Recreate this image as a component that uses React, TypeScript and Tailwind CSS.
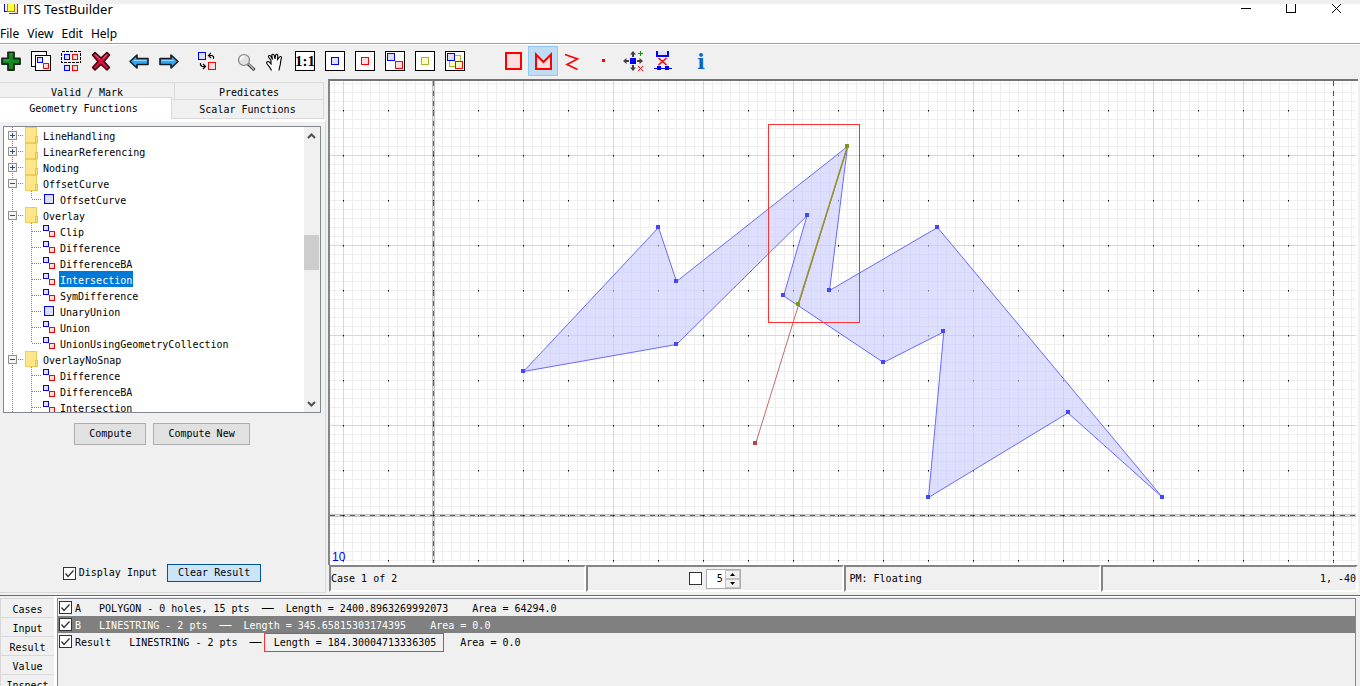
import { useState, type ReactNode } from "react";

const MONO = "font-['DejaVu_Sans_Mono','Liberation_Mono',monospace]";
const UI = "font-['Noto_Sans','Open_Sans',sans-serif]";

type Point = [number, number];

const POLYGON: Point[] = [
  [100, 160],
  [250, 320],
  [270, 260],
  [460, 410],
  [440, 250],
  [560, 320],
  [810, 20],
  [705, 114],
  [550, 20],
  [567, 204],
  [500, 170],
  [389, 244],
  [415, 333],
  [270, 190],
];
const LINE: Point[] = [
  [460, 410],
  [358, 80],
];
const RESULT: Point[] = [
  [460, 410],
  [405, 234],
];

// Model to view transform: origin in pixels and 0.9 px per model unit.
const ORIGIN_X = 103.5;
const ORIGIN_Y = 434.5;
const SCALE = 0.9;

const toView = ([x, y]: Point): Point => [ORIGIN_X + x * SCALE, ORIGIN_Y - y * SCALE];
const toPath = (pts: Point[]) => pts.map((p) => toView(p).join(",")).join(" ");

type TreeRow = { label: string; kind: "folder" | "unary" | "binary"; open?: boolean; last?: boolean; root?: string };

const TREE: TreeRow[] = [
  { label: "LineHandling", kind: "folder" },
  { label: "LinearReferencing", kind: "folder" },
  { label: "Noding", kind: "folder" },
  { label: "OffsetCurve", kind: "folder", open: true },
  { label: "OffsetCurve", kind: "unary", last: true, root: "OffsetCurve" },
  { label: "Overlay", kind: "folder", open: true },
  { label: "Clip", kind: "binary", root: "Overlay" },
  { label: "Difference", kind: "binary", root: "Overlay" },
  { label: "DifferenceBA", kind: "binary", root: "Overlay" },
  { label: "Intersection", kind: "binary", root: "Overlay" },
  { label: "SymDifference", kind: "binary", root: "Overlay" },
  { label: "UnaryUnion", kind: "unary", root: "Overlay" },
  { label: "Union", kind: "binary", root: "Overlay" },
  { label: "UnionUsingGeometryCollection", kind: "binary", last: true, root: "Overlay" },
  { label: "OverlayNoSnap", kind: "folder", open: true },
  { label: "Difference", kind: "binary", root: "OverlayNoSnap" },
  { label: "DifferenceBA", kind: "binary", root: "OverlayNoSnap" },
  { label: "Intersection", kind: "binary", root: "OverlayNoSnap" },
];

export default function App() {
  return (
    <div className={`flex h-screen min-h-0 flex-col overflow-hidden bg-[#f0f0f0] text-[10px] leading-4 text-black ${MONO}`}>
      <TitleBar />
      <MenuBar />
      <Toolbar />
      <main className="flex min-h-0 flex-1">
        <FunctionPanel />
        <section className="mr-0.5 flex min-w-0 flex-1 flex-col">
          <div className="min-h-0 flex-1 border-t-2 border-l-2 border-t-[#747474] border-l-[#858585] bg-white pr-0.5 pb-0.5">
            <GeometryCanvas />
          </div>
          <StatusBar />
        </section>
      </main>
      <ResultPanel />
    </div>
  );
}

function TitleBar() {
  return (
    <header className={`flex h-3.5 shrink-0 items-center border-t-4 border-[#f0f0f0] bg-white pl-1 text-[13px] ${UI}`}>
      <svg width="15" height="10" shapeRendering="crispEdges" aria-hidden="true">
        <path d="M0.5 0V7.5H6" fill="none" stroke="#00f" />
        <rect x="9" y="1" width="4" height="9" fill="#ffd6c0" />
        <path d="M13.5 0V10M5 9.5H14" fill="none" stroke="#f00" />
        <rect x="3.5" y="-2" width="7" height="9" fill="#ffff3c" stroke="#a08a10" />
      </svg>
      <h1 className="ml-1 flex-1">JTS TestBuilder</h1>
      <div className="flex gap-[34px] pr-[18px]">
        <button aria-label="Minimize">
          <svg width="11" height="10" shapeRendering="crispEdges">
            <path d="M0 4.5H10" stroke="#000" />
          </svg>
        </button>
        <button aria-label="Maximize">
          <svg width="11" height="10" shapeRendering="crispEdges">
            <path d="M0.5 0V8.5H9.5V0" fill="none" stroke="#000" />
          </svg>
        </button>
        <button aria-label="Close">
          <svg width="11" height="10">
            <path d="M1 0L10 9M10 0L1 9" stroke="#000" />
          </svg>
        </button>
      </div>
    </header>
  );
}

function MenuBar() {
  return (
    <nav className={`flex h-[30px] shrink-0 items-end gap-2 border-b border-[#a0a0a0] bg-white text-[12px] ${UI}`}>
      {["File", "View", "Edit", "Help"].map((label) => (
        <button key={label} className="h-[18px] leading-[18px]">
          {label}
        </button>
      ))}
    </nav>
  );
}

function Tool({ label, active, children }: { label: string; active?: boolean; children: ReactNode }) {
  return (
    <button
      aria-label={label}
      aria-pressed={active}
      className={`flex size-[30px] shrink-0 items-center justify-center ${active ? "border border-[#90c8f6] bg-[#c0dcf3]" : ""}`}
    >
      <svg width="20" height="20" viewBox="0 0 20 20" fill="none" className="shrink-0 overflow-visible">
        {children}
      </svg>
    </button>
  );
}

function Sq({ x, y, s, c }: { x: number; y: number; s: number; c: "blue" | "red" | "olive" }) {
  const stroke = { blue: "#00f", red: "#f00", olive: "#a8b432" }[c];
  const fill = { blue: "#dedeff", red: "#ffdede", olive: "#ffffc0" }[c];
  return <rect x={x + 0.5} y={y + 0.5} width={s - 1} height={s - 1} fill={fill} stroke={stroke} shapeRendering="crispEdges" />;
}

function Frame() {
  return <rect x="0.5" y="0.5" width="19" height="19" fill="#fff" stroke="#000" shapeRendering="crispEdges" />;
}

function Toolbar() {
  return (
    <div role="toolbar" className="flex h-[35px] shrink-0 items-start gap-2 border-t border-white pt-px">
      <div className="-ml-1 flex">
        <Tool label="New case">
          <path d="M7 1.5H13V7.5H19V13H13V19H7V13H1V7.5H7Z" fill="#118a22" stroke="#182818" strokeWidth="1.8" strokeLinejoin="round" />
          <path d="M8.5 3H11.5M2.5 9H8.5" stroke="#4cc04c" />
        </Tool>
        <Tool label="Copy case">
          <g shapeRendering="crispEdges">
            <rect x="0.5" y="0.5" width="15" height="15" fill="#fff" stroke="#000" />
            <rect x="4.5" y="4.5" width="15" height="15" fill="#fff" stroke="#000" />
          </g>
          <Sq x={6} y={6} s={6} c="blue" />
          <Sq x={12} y={12} s={6} c="red" />
        </Tool>
        <Tool label="Extract components">
          <rect x="0.5" y="0.5" width="19" height="11" stroke="#000" strokeDasharray="3 1" shapeRendering="crispEdges" />
          <Sq x={3} y={3} s={6} c="blue" />
          <Sq x={11} y={3} s={6} c="red" />
          <Sq x={3} y={14} s={6} c="blue" />
          <Sq x={11} y={14} s={6} c="red" />
        </Tool>
        <Tool label="Delete case">
          <path
            d="M4 1.5L10 7L16 1.5L18.5 4L13 10.5L18.5 16.5L16 19L10 13.5L4 19L1.5 16.5L7 10.5L1.5 4Z"
            fill="#d80f3c"
            stroke="#3c0810"
            strokeWidth="1.6"
            strokeLinejoin="round"
          />
          <path d="M4 3.5L9 8.5M16 3.5L12 7.5" stroke="#ff6d86" />
        </Tool>
      </div>
      <div className="flex">
        <Tool label="Previous case">
          <path d="M1 10.5L8 4V7.5H19V13.5H8V17Z" fill="#2fa8f5" stroke="#151c24" strokeWidth="1.6" strokeLinejoin="round" />
          <path d="M5 9.5H17.5" stroke="#93d6ff" />
        </Tool>
        <Tool label="Next case">
          <path d="M19 10.5L12 4V7.5H1V13.5H12V17Z" fill="#2fa8f5" stroke="#151c24" strokeWidth="1.6" strokeLinejoin="round" />
          <path d="M2.5 9.5H15" stroke="#93d6ff" />
        </Tool>
      </div>
      <div className="flex">
        <Tool label="Exchange A and B">
          <Sq x={1} y={1} s={8} c="blue" />
          <Sq x={11} y={11} s={8} c="red" />
          <path d="M16.5 8V5.5L15 4.5H12M14 2L11.5 4.5L14 7M3.5 12V14L5 15.5H8M6 13L8.5 15.5L6 18" stroke="#000" strokeWidth="1.2" />
        </Tool>
      </div>
      <div className="flex">
        <Tool label="Zoom">
          <path d="M13 13L19.5 19" stroke="#222" strokeWidth="3" />
          <path d="M13.5 13L19 18.5" stroke="#ccc" strokeWidth="1.2" />
          <circle cx="9" cy="9" r="5.5" fill="#e2e2e2" stroke="#808080" strokeWidth="1.2" />
          <path d="M5.5 9A3.5 3.5 0 0 1 9 5.5" stroke="#fff" strokeWidth="1.5" />
        </Tool>
        <Tool label="Pan">
          <path
            d="M6.5 19.5C6 17.5 4 15.5 1.8 12.5C1 11 3 9.8 4.5 11.2L6 13V9.5L3.5 6C3 4.5 5 4 5.8 5.2L7.5 8.5L6.8 4.5C6.8 2.8 8.8 2.8 9.2 4.5L10 8L10.7 4.2C11 2.6 13 3 12.8 4.8L12.5 8.5L14.6 6C15.6 4.8 17.2 6 16.2 7.8L15.5 11C15.8 14 14 16.5 14 19.5"
            fill="#fff"
            stroke="#000"
            strokeWidth="1.1"
          />
        </Tool>
        <Tool label="Zoom 1:1">
          <Frame />
          <text x="10" y="15" textAnchor="middle" fill="#000" className="font-['Liberation_Serif',serif] text-[15px] font-bold">
            1:1
          </text>
        </Tool>
        <Tool label="Zoom to A">
          <Frame />
          <Sq x={6} y={6} s={8} c="blue" />
        </Tool>
        <Tool label="Zoom to B">
          <Frame />
          <Sq x={6} y={6} s={8} c="red" />
        </Tool>
        <Tool label="Zoom to input">
          <Frame />
          <Sq x={2} y={2} s={8} c="blue" />
          <Sq x={10} y={10} s={8} c="red" />
        </Tool>
        <Tool label="Zoom to result">
          <Frame />
          <Sq x={6} y={6} s={8} c="olive" />
        </Tool>
        <Tool label="Zoom to all">
          <Frame />
          <Sq x={4} y={4} s={12} c="olive" />
          <Sq x={2} y={2} s={8} c="blue" />
          <rect x="10.5" y="10.5" width="7" height="7" fill="#ffffc0" stroke="#f00" shapeRendering="crispEdges" />
        </Tool>
      </div>
      <div className="ml-5 flex">
        <Tool label="Draw rectangle">
          <rect x="3" y="2" width="15" height="16" fill="#ffdede" stroke="#f00" strokeWidth="2" shapeRendering="crispEdges" />
        </Tool>
        <Tool label="Draw polygon" active>
          <path d="M3 18V3.5L10.5 11L18 3.5V18Z" fill="#ffdede" stroke="#f00" strokeWidth="2" />
        </Tool>
        <Tool label="Draw line">
          <path d="M2 3.5L14.5 8L4 13.5L14.5 18.5" stroke="#f00" strokeWidth="1.6" />
        </Tool>
        <Tool label="Draw point">
          <rect x="9" y="8" width="3" height="3" fill="#f00" />
        </Tool>
        <Tool label="Move vertices">
          <rect x="7" y="7" width="6" height="6" fill="#00f" />
          <path d="M10 3V6M10 14V17M3 10H6M14 10H17" stroke="#404040" strokeWidth="2" />
          <path d="M10 0L13 3.5H7ZM10 20L13 16.5H7ZM0 10L3.5 7V13ZM20 10L16.5 7V13Z" fill="#404040" />
          <path d="M17.5 0V5M15 2.5H20" stroke="#00a000" />
          <path d="M15 15L20 20M20 15L15 20" stroke="#f00" />
        </Tool>
        <Tool label="Delete component">
          <path d="M4 0V5H15V0" fill="#dedeff" stroke="#00f" strokeWidth="2" />
          <path d="M5.5 7L13.5 14M13.5 7L5.5 14" stroke="#f00" strokeWidth="1.6" />
          <path d="M1 17.5H19" stroke="#00f" />
          <rect x="4" y="15" width="4" height="4" fill="#00f" />
          <rect x="12" y="15" width="4" height="4" fill="#00f" />
        </Tool>
      </div>
      <div className="flex">
        <Tool label="Geometry info">
          <text x="10" y="18" textAnchor="middle" fill="#0a64c8" className="font-['DejaVu_Serif','Liberation_Serif',serif] text-[20px] font-bold">
            i
          </text>
        </Tool>
      </div>
    </div>
  );
}

function FunctionPanel() {
  const [selected, setSelected] = useState("Overlay/Intersection");

  return (
    <aside className="flex w-[328px] shrink-0 flex-col pt-[3px]">
      <div role="tablist" className="pr-1">
        <div className="flex h-[17px]">
          <button role="tab" className="w-[175px] overflow-hidden border-t border-r border-[#d9d9d9] pt-0.5 leading-4">
            Valid / Mark
          </button>
          <button role="tab" className="flex-1 overflow-hidden border-t border-r border-[#d9d9d9] pt-0.5 leading-4">
            Predicates
          </button>
        </div>
        <div className="flex h-5">
          <button role="tab" aria-selected="true" className="-mt-0.5 w-[172px] border-t border-r border-[#d9d9d9] bg-white pr-1">
            Geometry Functions
          </button>
          <button role="tab" className="flex-1 border border-l-0 border-[#d9d9d9] pt-0.5">
            Scalar Functions
          </button>
        </div>
      </div>
      <div className="mr-0.5 mb-0.5 flex min-h-0 flex-1 flex-col border-t-3 border-r border-b border-t-white border-r-[#d9d9d9] border-b-[#d9d9d9] pt-1 pl-[3px]">
        <div className="flex h-[287px] w-[318px] border border-[#828790] bg-white">
          <ul role="tree" className="min-w-0 flex-1 overflow-hidden">
            {TREE.map((row) => {
              const id = `${row.root ?? ""}/${row.label}`;
              return <TreeItem key={id} row={row} selected={id === selected} onSelect={() => setSelected(id)} />;
            })}
          </ul>
          <div className="flex w-4 flex-col justify-between bg-[#f0f0f0] pr-px">
            <button aria-label="Scroll up" className="flex h-[17px] items-center justify-center">
              <svg width="9" height="6" fill="none">
                <path d="M1 5L4.5 1.5L8 5" stroke="#505050" strokeWidth="2" />
              </svg>
            </button>
            <div className="flex-1 pt-[91px]">
              <div className="h-[35px] bg-[#cdcdcd]" />
            </div>
            <button aria-label="Scroll down" className="flex h-[17px] items-center justify-center">
              <svg width="9" height="6" fill="none">
                <path d="M1 1L4.5 4.5L8 1" stroke="#505050" strokeWidth="2" />
              </svg>
            </button>
          </div>
        </div>
        <div className="mt-[10px] flex justify-center gap-[7px] pr-1">
          <button className="h-[22px] border border-[#adadad] bg-[#e1e1e1] px-[14px]">Compute</button>
          <button className="h-[22px] border border-[#adadad] bg-[#e1e1e1] px-[14px]">Compute New</button>
        </div>
        <div className="mt-auto mb-[10px] flex items-center justify-center gap-[10px] pr-1">
          <label className="flex items-center gap-[3px]">
            <Check defaultChecked />
            Display Input
          </label>
          <button className="h-[18px] border border-[#00559b] bg-[#cce4f7] px-[10px]">Clear Result</button>
        </div>
      </div>
    </aside>
  );
}

function TreeItem({ row, selected, onSelect }: { row: TreeRow; selected: boolean; onSelect: () => void }) {
  const isFolder = row.kind === "folder";
  return (
    <li role="treeitem" aria-selected={selected} onClick={onSelect} className="flex h-4">
      <svg width={isFolder ? 38 : 55} height="16" className="shrink-0" fill="none" shapeRendering="crispEdges" aria-hidden="true">
        <path d="M8.5 0V16" stroke="#808080" strokeDasharray="1 1" />
        {isFolder ? (
          <>
            <path d="M14 8.5H20" stroke="#808080" strokeDasharray="1 1" />
            <rect x="4.5" y="4.5" width="8" height="8" fill="#f4f4f4" stroke="#919191" />
            <path d="M6 8.5H11" stroke="#2b4b9b" />
            {!row.open && <path d="M8.5 6V11" stroke="#2b4b9b" />}
            <rect x="21.5" y="0.5" width="11" height="15" fill="#ffe68c" stroke="#f0cd55" />
            <rect x="31.5" y="9.5" width="2" height="6" fill="#ffe68c" stroke="#e8c23c" />
          </>
        ) : (
          <>
            <path d={row.last ? "M27.5 0V8" : "M27.5 0V16"} stroke="#808080" strokeDasharray="1 1" />
            <path d="M28 8.5H37" stroke="#808080" strokeDasharray="1 1" />
            {row.kind === "unary" ? (
              <Sq x={40} y={3} s={10} c="blue" />
            ) : (
              <>
                <Sq x={39} y={2} s={6} c="blue" />
                <Sq x={45} y={8} s={6} c="red" />
              </>
            )}
          </>
        )}
      </svg>
      <span className={`h-4 px-px pt-0.5 whitespace-nowrap ${selected ? "bg-[#0078d7] text-white" : ""}`}>{row.label}</span>
    </li>
  );
}

function Check({ defaultChecked, label }: { defaultChecked?: boolean; label?: string }) {
  return (
    <span className="relative inline-flex size-[13px] shrink-0">
      <input
        type="checkbox"
        defaultChecked={defaultChecked}
        aria-label={label}
        className="peer size-[13px] appearance-none border border-[#333] bg-white"
      />
      <svg viewBox="0 0 13 13" fill="none" className="pointer-events-none absolute inset-0 hidden peer-checked:block">
        <path d="M2.5 6.5L5 9.5L10.5 3.5" stroke="#333" strokeWidth="1.3" />
      </svg>
    </span>
  );
}

function Vertices({ pts, color }: { pts: Point[]; color: string }) {
  return (
    <>
      {pts.map((p) => {
        const [x, y] = toView(p);
        return <rect key={p.join()} x={Math.floor(x) - 2} y={Math.floor(y) - 2} width="4" height="4" fill={color} />;
      })}
    </>
  );
}

function GeometryCanvas() {
  return (
    <div className="relative h-full overflow-hidden">
      <svg className="block size-full" aria-label="Geometry view">
        <defs>
          <pattern id="minor" x="103" y="434" width="9" height="9" patternUnits="userSpaceOnUse">
            <path d="M0.5 0V9M0 0.5H9" stroke="#eee" />
          </pattern>
          <pattern id="major" x="103" y="434" width="90" height="90" patternUnits="userSpaceOnUse">
            <path d="M0.5 0V90M0 0.5H90" stroke="#d6d6d6" />
          </pattern>
          <pattern id="dots" x="103" y="434" width="45" height="45" patternUnits="userSpaceOnUse">
            <rect width="1" height="1" fill="#000" />
            <rect y="1" width="1" height="1" fill="#777" />
          </pattern>
        </defs>
        <g shapeRendering="crispEdges">
          <rect width="100%" height="100%" fill="url(#minor)" />
          <rect width="100%" height="100%" fill="url(#major)" />
          <rect x="102" y="0" width="3" height="100%" fill="#c0c0c0" />
          <rect x="0" y="433" width="100%" height="3" fill="#c0c0c0" />
          <line x1="103.5" y1="0" x2="103.5" y2="100%" stroke="#e4e4e4" />
          <line x1="0" y1="434.5" x2="100%" y2="434.5" stroke="#e4e4e4" />
          <line x1="103.5" y1="0" x2="103.5" y2="100%" stroke="#606060" strokeDasharray="5 5" />
          <line x1="0" y1="434.5" x2="100%" y2="434.5" stroke="#606060" strokeDasharray="5 5" />
          <line x1="1003.5" y1="0" x2="1003.5" y2="100%" stroke="#e4e4e4" />
          <line x1="1003.5" y1="0" x2="1003.5" y2="100%" stroke="#505050" strokeDasharray="5 5" />
          <rect width="100%" height="100%" fill="url(#dots)" />
        </g>
        <polygon points={toPath(POLYGON)} fill="#c8c8ff" fillOpacity="0.6" stroke="#6a6aff" />
        <Vertices pts={POLYGON} color="#4646f5" />
        <polyline points={toPath(LINE)} fill="none" stroke="#c46a6a" />
        <Vertices pts={LINE.slice(1)} color="#b04848" />
        <polyline points={toPath(RESULT)} fill="none" stroke="#8c9628" strokeWidth="1.5" />
        <Vertices pts={RESULT} color="#789b14" />
        <rect x="438.5" y="43.5" width="91" height="198" fill="none" stroke="#ff3232" shapeRendering="crispEdges" />
      </svg>
      <span className="absolute bottom-0 left-0.5 font-['Liberation_Sans',sans-serif] text-[12px] leading-3 text-[#0000ff]">10</span>
    </div>
  );
}

function StatusBar() {
  const cell = "flex min-w-0 flex-1 items-center border-2 border-t-[#858585] border-l-[#858585] border-r-white border-b-white";
  return (
    <footer className="mb-[3px] ml-px flex h-[27px] shrink-0">
      <div className={cell}>Case 1 of 2</div>
      <div className={`${cell} justify-center gap-1`}>
        <Check label="Show stacked" />
        <div className="flex h-5 border border-[#adadad] bg-white">
          <input aria-label="Stack size" defaultValue="5" className="w-4 bg-white text-right" />
          <div className="ml-0.5 flex w-[15px] flex-col">
            <button aria-label="Increase" className="flex flex-1 items-center justify-center border border-[#c4c4c4] bg-[#f0f0f0]">
              <svg width="5" height="3">
                <path d="M0 3L2.5 0L5 3Z" />
              </svg>
            </button>
            <button aria-label="Decrease" className="flex flex-1 items-center justify-center border border-[#c4c4c4] bg-[#f0f0f0]">
              <svg width="5" height="3">
                <path d="M0 0L2.5 3L5 0Z" />
              </svg>
            </button>
          </div>
        </div>
      </div>
      <div className={cell}>
        <span className="ml-1">PM: Floating</span>
      </div>
      <div className={`${cell} justify-end whitespace-pre`}>1, -40</div>
    </footer>
  );
}

function ResultPanel() {
  return (
    <section className="flex h-[91px] shrink-0 overflow-hidden border-t border-[#696969]">
      <div role="tablist" className="w-[54px] shrink-0 pt-0.5">
        {["Cases", "Input", "Result", "Value", "Inspect"].map((tab) => (
          <button key={tab} role="tab" className="block h-[19px] w-full border-t border-l border-[#d9d9d9] pt-1 leading-[14px]">
            {tab}
          </button>
        ))}
      </div>
      <div className="flex min-w-0 flex-1 border-t border-l-3 border-white pt-px pr-1">
        <ul className="min-w-0 flex-1 border border-b-0 border-[#828790]">
          <ResultRow name="A" gap="   " text="POLYGON - 0 holes, 15 pts" length="2400.8963269992073" area="64294.0" />
          <ResultRow name="B" gap="   " text="LINESTRING - 2 pts" length="345.65815303174395" area="0.0" selected />
          <ResultRow name="Result" gap="   " text="LINESTRING - 2 pts" length="184.30004713336305" area="0.0" marked />
        </ul>
      </div>
    </section>
  );
}

type ResultRowProps = { name: string; gap: string; text: string; length: string; area: string; selected?: boolean; marked?: boolean };

function ResultRow({ name, gap, text, length, area, selected, marked }: ResultRowProps) {
  return (
    <li className={selected ? "bg-[#808080] text-white" : ""}>
      <label className="flex h-[17px] items-center gap-[3px] pl-px whitespace-pre">
        <Check defaultChecked />
        <span className="pt-0.5 leading-[15px]">
          {`${name}${gap}${text}  `}
          <span className="font-['Liberation_Sans',sans-serif] text-[12px] leading-none">—</span>
          {"  "}
          <span className="relative">
            {`Length = ${length}`}
            {marked && <span className="absolute -top-1 -right-2 -bottom-1 -left-2.5 border border-[#ff3232]" />}
          </span>
          {`    Area = ${area}`}
        </span>
      </label>
    </li>
  );
}
